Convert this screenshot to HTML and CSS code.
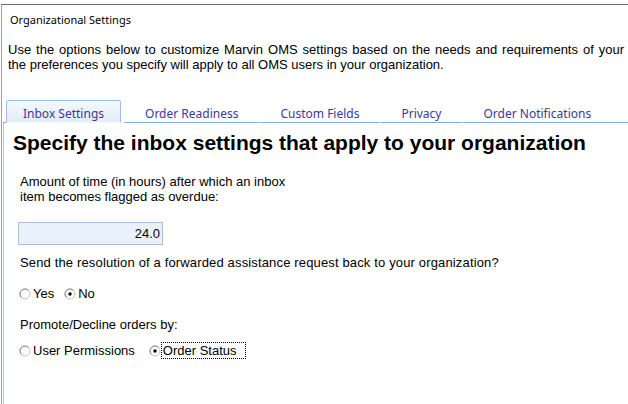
FILE: index.html
```html
<!DOCTYPE html>
<html>
<head>
<meta charset="utf-8">
<link rel="stylesheet" href="styles.css">
</head>
<body>
<div class="window">
  <div class="title">Organizational Settings</div>
  <div class="desc">
    <div class="desc-line justify">Use the options below to customize Marvin OMS settings based on the needs and requirements of your</div>
    <div class="desc-line">the preferences you specify will apply to all OMS users in your organization.</div>
  </div>
  <div class="tabs">
    <div class="tab-edge"></div>
    <div class="tab active">Inbox Settings</div>
    <div class="tab second">Order Readiness</div>
    <div class="tab">Custom Fields</div>
    <div class="tab">Privacy</div>
    <div class="tab">Order Notifications</div>
    <div class="tab-fill"></div>
  </div>
  <div class="panel">
    <h1 class="heading">Specify the inbox settings that apply to your organization</h1>
    <p class="text label">Amount of time (in hours) after which an inbox<br>item becomes flagged as overdue:</p>
    <div class="input">24.0</div>
    <p class="text question">Send the resolution of a forwarded assistance request back to your organization?</p>
    <div class="radios yn">
      <div class="radio">
        <svg class="rb" viewBox="0 0 12 12" width="12" height="12"><circle cx="6" cy="6" r="5" fill="#fff" stroke="#c4c4c4"/><path d="M2.46 9.54A5 5 0 0 1 9.54 2.46" fill="none" stroke="#8c8c8c"/></svg>
        <span class="rl">Yes</span>
      </div>
      <div class="radio">
        <svg class="rb" viewBox="0 0 12 12" width="12" height="12"><circle cx="6" cy="6" r="5" fill="#fff" stroke="#c4c4c4"/><path d="M2.46 9.54A5 5 0 0 1 9.54 2.46" fill="none" stroke="#8c8c8c"/><circle cx="6" cy="6" r="1.7" fill="#000"/></svg>
        <span class="rl">No</span>
      </div>
    </div>
    <p class="text promote">Promote/Decline orders by:</p>
    <div class="radios pd">
      <div class="radio">
        <svg class="rb" viewBox="0 0 12 12" width="12" height="12"><circle cx="6" cy="6" r="5" fill="#fff" stroke="#c4c4c4"/><path d="M2.46 9.54A5 5 0 0 1 9.54 2.46" fill="none" stroke="#8c8c8c"/></svg>
        <span class="rl">User Permissions</span>
      </div>
      <div class="radio">
        <svg class="rb" viewBox="0 0 12 12" width="12" height="12"><circle cx="6" cy="6" r="5" fill="#fff" stroke="#c4c4c4"/><path d="M2.46 9.54A5 5 0 0 1 9.54 2.46" fill="none" stroke="#8c8c8c"/><circle cx="6" cy="6" r="1.7" fill="#000"/></svg>
        <span class="rl focus">Order Status</span>
      </div>
    </div>
  </div>
</div>
</body>
</html>
```
FILE: styles.css
```css
html, body {
  margin: 0;
  padding: 0;
  background: #ffffff;
  overflow: hidden;
}
body {
  width: 628px;
  height: 404px;
  font-family: "Liberation Sans", Arial, sans-serif;
  color: #000;
}
.window {
  box-sizing: border-box;
  margin: 4px 0 0 1px;
  height: 400px;
  border-top: 1px solid #6b6b6b;
  border-left: 1px solid #a0a0a0;
  background: #fff;
  overflow: hidden;
}
.title {
  font-family: "Noto Sans", sans-serif;
  font-size: 11px;
  line-height: 15px;
  padding: 7px 0 0 8px;
  white-space: nowrap;
}
.desc {
  margin-top: 15px;
  padding-left: 6px;
  font-size: 13px;
  line-height: 15px;
  white-space: nowrap;
}
.desc-line.justify {
  width: 616px;
  white-space: normal;
  text-align: justify;
  text-align-last: justify;
}
.tabs {
  display: flex;
  margin: 28px 0 0 1px;
  font-family: "Noto Sans", sans-serif;
  font-size: 12px;
  line-height: 15px;
  color: #3a3a96;
  white-space: nowrap;
}
.tab {
  border: 1px solid transparent;
  border-bottom-color: #86a8dc;
  padding: 5px 20px 1px;
}
.tab.second {
  margin-left: 3px;
}
.tab.active {
  border-color: #9fbde8;
  border-bottom-color: transparent;
  border-radius: 2px 2px 0 0;
  padding: 5px 16px 1px;
  background: linear-gradient(#f5f8fd, #e4ecf8);
}
.tab-edge {
  width: 3px;
  border-bottom: 1px solid #86a8dc;
}
.tab-fill {
  flex: 1;
  border-bottom: 1px solid #86a8dc;
}
.panel {
  margin-left: 1px;
  height: 300px;
  border-left: 1px solid #b9c6dc;
  overflow: hidden;
}
.heading {
  margin: 8px 0 0 9px;
  font-size: 21px;
  line-height: 24px;
  font-weight: bold;
  white-space: nowrap;
}
.text {
  margin: 0 0 0 16px;
  font-size: 13px;
  line-height: 15px;
  white-space: nowrap;
}
.label { margin-top: 19px; }
.question { margin-top: 10px; letter-spacing: 0.15px; }
.promote { margin-top: 15px; }
.input {
  box-sizing: border-box;
  margin: 18px 0 0 14px;
  width: 145px;
  height: 23px;
  border: 1px solid #a9c0e2;
  background: #e9f1fc;
  padding: 3px 2px 0 0;
  font-size: 13px;
  line-height: 15px;
  text-align: right;
}
.radios {
  display: flex;
  align-items: center;
  margin-left: 15px;
  font-size: 13px;
  line-height: 15px;
  white-space: nowrap;
}
.radios.yn { margin-top: 15px; gap: 1px; }
.radios.pd { margin-top: 10px; gap: 5px; }
.radio {
  display: flex;
  align-items: center;
}
.rb {
  display: block;
  flex: none;
}
.rl {
  border: 1px solid transparent;
  padding: 0 8px 0 1px;
}
.rl.focus {
  border: 1px dotted #000;
}
```
